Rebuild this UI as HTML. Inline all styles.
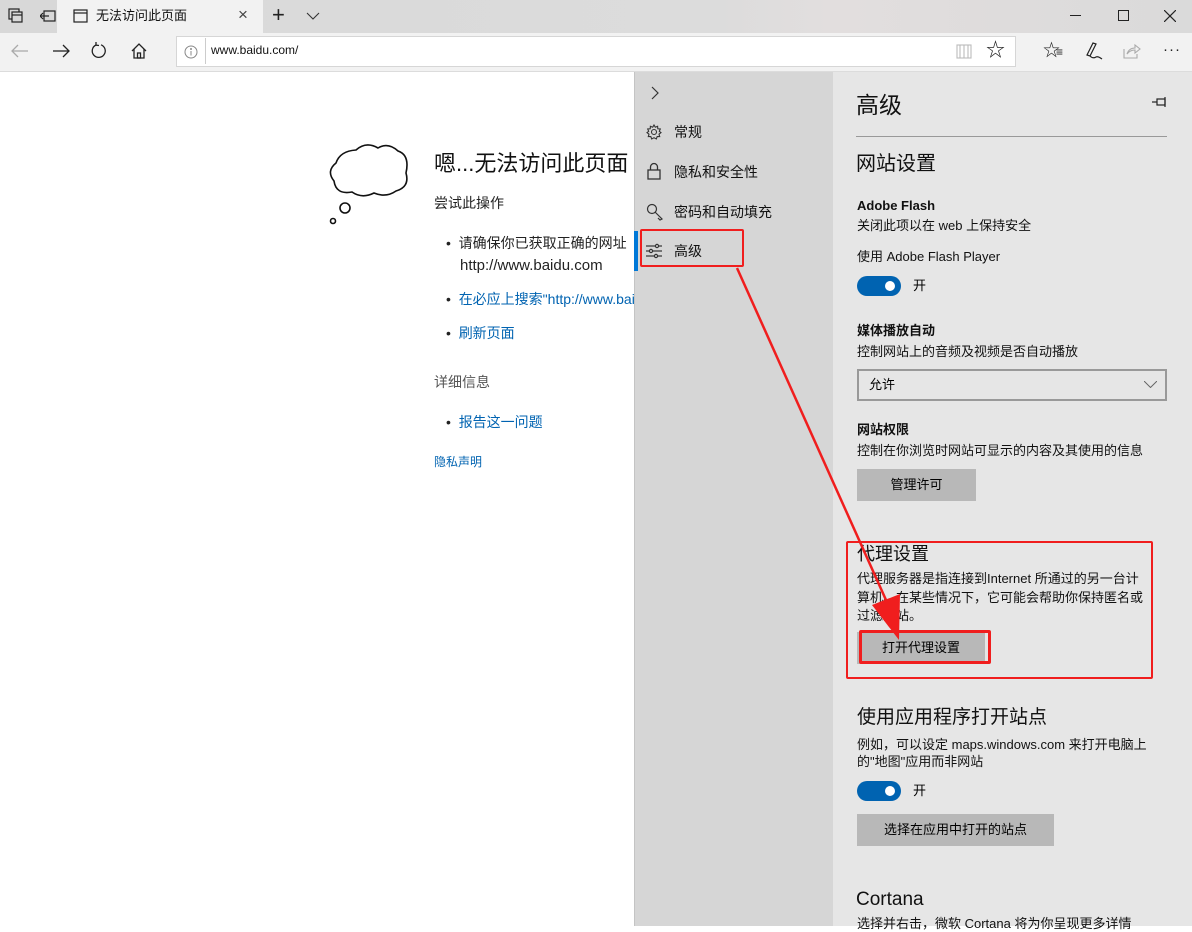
<!DOCTYPE html>
<html><head><meta charset="utf-8"><style>
*{margin:0;padding:0;box-sizing:border-box}
body{width:1192px;height:926px;overflow:hidden;position:relative;background:#fff;font-family:"Liberation Sans","Noto Sans CJK SC",sans-serif;color:#000}
.a{position:absolute;white-space:nowrap;line-height:1.2}
.t13{font-size:13px}
.t14{font-size:14px}
.btn{position:absolute;background:#b8b8b8;font-size:13px;text-align:center}
.tog{position:absolute;width:44px;height:20px;border-radius:10px;background:#0063b1}
.tog:after{content:"";position:absolute;right:6px;top:5px;width:10px;height:10px;border-radius:5px;background:#fff}
svg{position:absolute}
</style></head><body>
<div class="a" style="left:0;top:0;width:1192px;height:33px;background:linear-gradient(90deg,#d8d8d8,#dcdcdc 60%,#e2dede 70%,#dadada)"></div>
<div class="a" style="left:57px;top:0;width:206px;height:33px;background:#f2f2f2"></div>
<svg style="left:8px;top:8px" width="16" height="16" viewBox="0 0 16 16" fill="none" stroke="#222" stroke-width="1.2"><rect x="1" y="1" width="10" height="10"/><rect x="4" y="4" width="10" height="10" fill="#d8d8d8"/><line x1="4" y1="7" x2="14" y2="7"/></svg>
<svg style="left:40px;top:9px" width="16" height="14" viewBox="0 0 16 14" fill="none" stroke="#222" stroke-width="1.2"><rect x="4" y="2" width="11" height="10"/><line x1="0" y1="7" x2="9" y2="7"/><polyline points="3,4 0,7 3,10"/></svg>
<svg style="left:73px;top:9px" width="15" height="14" viewBox="0 0 15 14" fill="none" stroke="#222" stroke-width="1.2"><rect x="1" y="1" width="13" height="12"/><line x1="1" y1="4" x2="14" y2="4"/></svg>
<div class="a t13" style="left:96px;top:8px;color:#111">无法访问此页面</div>
<div class="a" style="left:238px;top:5px;font-size:17px;color:#444">×</div>
<div class="a" style="left:272px;top:2px;font-size:22px;color:#222;font-weight:300">+</div>
<svg style="left:306px;top:12px" width="14" height="8" viewBox="0 0 14 8" fill="none" stroke="#333" stroke-width="1.1"><polyline points="1,1 7,7 13,1"/></svg>
<div class="a" style="left:1070px;top:15px;width:11px;height:1px;background:#222"></div>
<div class="a" style="left:1118px;top:10px;width:11px;height:11px;border:1.3px solid #222"></div>
<svg style="left:1164px;top:10px" width="12" height="12" viewBox="0 0 12 12" stroke="#222" stroke-width="1.2"><line x1="0" y1="0" x2="12" y2="12"/><line x1="12" y1="0" x2="0" y2="12"/></svg>
<div class="a" style="left:0;top:33px;width:1192px;height:39px;background:#f2f2f2;border-bottom:1px solid #dcdcdc"></div>
<svg style="left:11px;top:44px" width="18" height="14" viewBox="0 0 18 14" fill="none" stroke="#aaa" stroke-width="1.3"><line x1="1" y1="7" x2="17" y2="7"/><polyline points="7,1 1,7 7,13"/></svg>
<svg style="left:52px;top:44px" width="18" height="14" viewBox="0 0 18 14" fill="none" stroke="#222" stroke-width="1.3"><line x1="1" y1="7" x2="17" y2="7"/><polyline points="11,1 17,7 11,13"/></svg>
<svg style="left:90px;top:42px" width="18" height="18" viewBox="0 0 18 18" fill="none" stroke="#222" stroke-width="1.3"><path d="M6 3 A6.5 6.5 0 1 0 11 2.8"/><polyline points="6,0 6,3.2 9,3.5"/></svg>
<svg style="left:131px;top:43px" width="16" height="16" viewBox="0 0 16 16" fill="none" stroke="#222" stroke-width="1.3"><polyline points="1,8 8,1 15,8"/><polyline points="3,6 3,15 13,15 13,6"/><rect x="6.5" y="10" width="3" height="5"/></svg>
<div class="a" style="left:176px;top:36px;width:840px;height:31px;background:#fff;border:1px solid #d6d6d6"></div>
<svg style="left:184px;top:45px" width="14" height="14" viewBox="0 0 14 14" fill="none" stroke="#888" stroke-width="1"><circle cx="7" cy="7" r="6"/><line x1="7" y1="6" x2="7" y2="10.5"/><circle cx="7" cy="4" r=".5"/></svg>
<div class="a" style="left:205px;top:38px;width:1px;height:26px;background:#ccc"></div>
<div class="a" style="left:211px;top:43px;font-size:12px;color:#111">www.baidu.com/</div>
<svg style="left:956px;top:44px" width="16" height="15" viewBox="0 0 16 15" fill="none" stroke="#bbb" stroke-width="1.1"><rect x="1" y="1" width="14" height="13"/><line x1="8" y1="1" x2="8" y2="14"/><line x1="4" y1="1" x2="4" y2="14"/><line x1="12" y1="1" x2="12" y2="14"/></svg>
<div class="a" style="left:986px;top:40px;font-size:19px;color:#222">☆</div>
<div class="a" style="left:1043px;top:41px;font-size:17px;color:#222">☆<span style="font-size:12px;margin-left:-4px">≡</span></div>
<svg style="left:1084px;top:41px" width="20" height="20" viewBox="0 0 20 20" fill="none" stroke="#222" stroke-width="1.2"><path d="M3 14 L9 2 L12 3 L6 15 Z M6 15 Q9 18 12 16 Q14 15 18 18"/></svg>
<svg style="left:1123px;top:43px" width="18" height="16" viewBox="0 0 18 16" fill="none" stroke="#aaa" stroke-width="1.1"><polyline points="1,6 1,15 14,15 14,11"/><path d="M4 11 Q6 5 12 5 L12 2 L17 6 L12 10 L12 7 Q7 7 4 11Z"/></svg>
<div class="a" style="left:1163px;top:41px;font-size:15px;color:#222;letter-spacing:1px">···</div>
<svg style="left:326px;top:143px" width="86" height="83" viewBox="0 0 86 83" fill="none" stroke="#111" stroke-width="1.6"><path d="M30 7 Q40 -2 52 5 Q62 -1 72 8 Q84 12 80 30 Q84 44 70 48 Q60 55 48 50 Q36 56 26 49 Q10 52 8 38 Q0 28 10 20 Q14 8 30 7Z"/><circle cx="19" cy="65" r="5"/><circle cx="7" cy="78" r="2.5"/></svg>
<div class="a" style="left:434px;top:151px;font-size:22px;color:#111">嗯...无法访问此页面</div>
<div class="a t14" style="left:434px;top:195px;color:#222">尝试此操作</div>
<div class="a t14" style="left:446px;top:235px;color:#222">•&nbsp;&nbsp;请确保你已获取正确的网址</div>
<div class="a t14" style="left:460px;top:257px;color:#222;font-size:15px">http://www.baidu.com</div>
<div class="a t14" style="left:446px;top:291px;color:#222">•&nbsp;&nbsp;<span style="color:#0063b1">在必应上搜索"http://www.baidu.com"</span></div>
<div class="a t14" style="left:446px;top:325px;color:#222">•&nbsp;&nbsp;<span style="color:#0063b1">刷新页面</span></div>
<div class="a t14" style="left:434px;top:374px;color:#555">详细信息</div>
<div class="a t14" style="left:446px;top:414px;color:#222">•&nbsp;&nbsp;<span style="color:#0063b1">报告这一问题</span></div>
<div class="a" style="left:434px;top:455px;font-size:12px;color:#0063b1">隐私声明</div>
<div class="a" style="left:634px;top:72px;width:199px;height:854px;background:#d6d6d6;border-left:1px solid #c4c4c4"></div>
<svg style="left:651px;top:86px" width="9" height="14" viewBox="0 0 9 14" fill="none" stroke="#333" stroke-width="1.2"><polyline points="1,1 7,7 1,13"/></svg>
<svg style="left:646px;top:124px" width="16" height="16" viewBox="0 0 16 16" fill="none" stroke="#333" stroke-width="1.1"><circle cx="8" cy="8" r="2.5"/><path d="M8 1 L9.3 3.2 L11.6 2.3 L11.8 4.8 L14.3 5 L13.3 7.3 L15 8.6 L13 10.2 L13.7 12.6 L11.2 12.6 L10.3 15 L8 13.7 L5.7 15 L4.8 12.6 L2.3 12.6 L3 10.2 L1 8.6 L2.7 7.3 L1.7 5 L4.2 4.8 L4.4 2.3 L6.7 3.2 Z"/></svg>
<div class="a t14" style="left:674px;top:124px;color:#111">常规</div>
<svg style="left:647px;top:162px" width="14" height="18" viewBox="0 0 14 18" fill="none" stroke="#333" stroke-width="1.3"><rect x="1" y="8" width="12" height="9"/><path d="M3.5 8 V5 A3.5 3.5 0 0 1 10.5 5 V8"/></svg>
<div class="a t14" style="left:674px;top:164px;color:#111">隐私和安全性</div>
<svg style="left:646px;top:203px" width="18" height="18" viewBox="0 0 18 18" fill="none" stroke="#333" stroke-width="1.2"><circle cx="6" cy="6" r="4.5"/><polyline points="9,9 16,16 14,17 12,15"/></svg>
<div class="a t14" style="left:674px;top:204px;color:#111">密码和自动填充</div>
<div class="a" style="left:634px;top:231px;width:4px;height:40px;background:#0078d7"></div>
<svg style="left:646px;top:243px" width="16" height="16" viewBox="0 0 16 16" fill="none" stroke="#333" stroke-width="1.2"><line x1="0" y1="3" x2="16" y2="3"/><line x1="0" y1="8" x2="16" y2="8"/><line x1="0" y1="13" x2="16" y2="13"/><circle cx="11" cy="3" r="1.6" fill="#d6d6d6"/><circle cx="5" cy="8" r="1.6" fill="#d6d6d6"/><circle cx="10" cy="13" r="1.6" fill="#d6d6d6"/></svg>
<div class="a t14" style="left:674px;top:243px;color:#111">高级</div>
<div class="a" style="left:833px;top:72px;width:359px;height:854px;background:#e6e6e6"></div>
<div class="a" style="left:856px;top:92px;font-size:23px;color:#111">高级</div>
<svg style="left:1152px;top:97px" width="16" height="10" viewBox="0 0 16 10" fill="none" stroke="#222" stroke-width="1.2"><line x1="0" y1="5" x2="5" y2="5"/><rect x="5" y="2" width="8" height="6"/><line x1="13" y1="0" x2="13" y2="10"/></svg>
<div class="a" style="left:856px;top:136px;width:311px;height:1px;background:#999"></div>
<div class="a" style="left:856px;top:152px;font-size:20px;color:#111">网站设置</div>
<div class="a t13" style="left:857px;top:198px;font-weight:bold;color:#111">Adobe Flash</div>
<div class="a t13" style="left:857px;top:218px;color:#111">关闭此项以在 web 上保持安全</div>
<div class="a t13" style="left:857px;top:249px;color:#111">使用 Adobe Flash Player</div>
<div class="tog" style="left:857px;top:276px"></div>
<div class="a t13" style="left:913px;top:278px">开</div>
<div class="a t13" style="left:857px;top:323px;font-weight:bold;color:#111">媒体播放自动</div>
<div class="a t13" style="left:857px;top:344px;color:#111">控制网站上的音频及视频是否自动播放</div>
<div class="a" style="left:857px;top:369px;width:310px;height:32px;border:2px solid #999;background:#e6e6e6"></div>
<div class="a t13" style="left:869px;top:377px">允许</div>
<svg style="left:1144px;top:381px" width="13" height="7" viewBox="0 0 13 7" fill="none" stroke="#666" stroke-width="1"><polyline points="0,0 6.5,6.5 13,0"/></svg>
<div class="a t13" style="left:857px;top:422px;font-weight:bold;color:#111">网站权限</div>
<div class="a t13" style="left:857px;top:443px;color:#111">控制在你浏览时网站可显示的内容及其使用的信息</div>
<div class="btn" style="left:857px;top:469px;width:119px;height:32px;line-height:32px">管理许可</div>
<div class="a" style="left:857px;top:544px;font-size:18px;color:#111">代理设置</div>
<div class="a t13" style="left:857px;top:571px;color:#111">代理服务器是指连接到Internet 所通过的另一台计</div>
<div class="a t13" style="left:857px;top:590px;color:#111">算机。在某些情况下，它可能会帮助你保持匿名或</div>
<div class="a t13" style="left:857px;top:608px;color:#111">过滤网站。</div>
<div class="btn" style="left:857px;top:632px;width:128px;height:32px;line-height:32px">打开代理设置</div>
<div class="a" style="left:857px;top:707px;font-size:19px;color:#111">使用应用程序打开站点</div>
<div class="a t13" style="left:857px;top:737px;color:#111">例如，可以设定 maps.windows.com 来打开电脑上</div>
<div class="a t13" style="left:857px;top:754px;color:#111">的"地图"应用而非网站</div>
<div class="tog" style="left:857px;top:781px"></div>
<div class="a t13" style="left:913px;top:783px">开</div>
<div class="btn" style="left:857px;top:814px;width:197px;height:32px;line-height:32px">选择在应用中打开的站点</div>
<div class="a" style="left:856px;top:889px;font-size:19px;color:#111">Cortana</div>
<div class="a t13" style="left:857px;top:916px;color:#111">选择并右击，微软 Cortana 将为你呈现更多详情</div>
<div class="a" style="left:640px;top:229px;width:104px;height:38px;border:2px solid #f01e1e;border-radius:2px"></div>
<div class="a" style="left:846px;top:541px;width:307px;height:138px;border:2px solid #f01e1e;border-radius:2px"></div>
<div class="a" style="left:859px;top:630px;width:132px;height:34px;border:3px solid #f01e1e;border-radius:2px"></div>
<svg style="left:0;top:0" width="1192" height="926"><line x1="737" y1="268" x2="886" y2="600" stroke="#f01e1e" stroke-width="2.5"/><polygon points="872,605 900,594 899,640" fill="#f01e1e"/></svg>
</body></html>
